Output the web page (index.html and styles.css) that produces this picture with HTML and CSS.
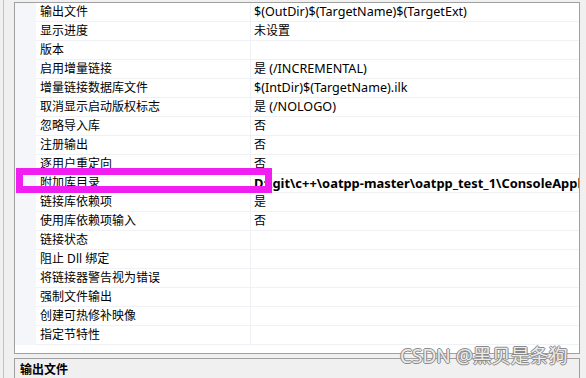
FILE: index.html
```html
<!DOCTYPE html>
<html lang="zh-CN">
<head>
<meta charset="utf-8">
<title>链接器 - 常规</title>
<link rel="stylesheet" href="styles.css">
</head>
<body>
<div class="screen">
  <div class="rail-area"><div class="rail"></div></div>
  <div class="main">
    <div class="panel">
      <div class="gutter"></div>
      <div class="grid">
        <div class="row"><div class="name">输出文件</div><div class="value"><span class="lat">$(OutDir)$(TargetName)$(TargetExt)</span></div></div>
        <div class="row"><div class="name">显示进度</div><div class="value">未设置</div></div>
        <div class="row"><div class="name">版本</div><div class="value"></div></div>
        <div class="row"><div class="name">启用增量链接</div><div class="value">是 <span class="lat">(/INCREMENTAL)</span></div></div>
        <div class="row"><div class="name">增量链接数据库文件</div><div class="value"><span class="lat">$(IntDir)$(TargetName).ilk</span></div></div>
        <div class="row"><div class="name">取消显示启动版权标志</div><div class="value">是 <span class="lat">(/NOLOGO)</span></div></div>
        <div class="row"><div class="name">忽略导入库</div><div class="value">否</div></div>
        <div class="row"><div class="name">注册输出</div><div class="value">否</div></div>
        <div class="row"><div class="name">逐用户重定向</div><div class="value">否</div></div>
        <div class="row"><div class="name">附加库目录</div><div class="value"><span class="lat bold">D:\git\c++\oatpp-master\oatpp_test_1\ConsoleAppli</span></div></div>
        <div class="row"><div class="name">链接库依赖项</div><div class="value">是</div></div>
        <div class="row"><div class="name">使用库依赖项输入</div><div class="value">否</div></div>
        <div class="row"><div class="name">链接状态</div><div class="value"></div></div>
        <div class="row"><div class="name">阻止 Dll 绑定</div><div class="value"></div></div>
        <div class="row"><div class="name">将链接器警告视为错误</div><div class="value"></div></div>
        <div class="row"><div class="name">强制文件输出</div><div class="value"></div></div>
        <div class="row"><div class="name">创建可热修补映像</div><div class="value"></div></div>
        <div class="row"><div class="name">指定节特性</div><div class="value"></div></div>
      </div>
    </div>
    <div class="desc">
      <div class="desc-title">输出文件</div>
    </div>
  </div>
  <div class="highlight"></div>
  <div class="watermark">CSDN @黑贝是条狗</div>
</div>
</body>
</html>
```
FILE: styles.css
```css
html, body {
  margin: 0;
  padding: 0;
  background: #f0f0f0;
}
body {
  width: 586px;
  height: 378px;
  overflow: hidden;
  font-family: "Noto Sans", "Noto Sans CJK SC", sans-serif;
  font-size: 12px;
  color: #000;
}
.screen {
  position: relative;
  display: flex;
  width: 586px;
  height: 378px;
}
.rail-area {
  width: 14px;
  flex: none;
  display: flex;
}
.rail {
  margin-left: 3px;
  width: 1px;
  background: #c2c2c2;
}
.main {
  width: 566px;
  flex: none;
  padding-top: 2px;
  display: flex;
  flex-direction: column;
  gap: 4px;
}
.panel {
  height: 354px;
  border: 1px solid #a0a0a0;
  background: #fff;
  display: flex;
  overflow: hidden;
}
.gutter {
  width: 21px;
  flex: none;
  background: #f4f6fa;
  height: 342px;
}
.grid {
  flex: 1;
  min-width: 0;
}
.row {
  display: flex;
  height: 18px;
  border-bottom: 1px solid #eff1f5;
  line-height: 18px;
}
.name {
  width: 210px;
  flex: none;
  padding-left: 4px;
  border-right: 1px solid #eff1f5;
  white-space: nowrap;
}
.value {
  flex: 1;
  min-width: 0;
  padding-left: 3px;
  white-space: nowrap;
  overflow: hidden;
}
.lat {
  font-size: 12.6px;
}
.bold {
  font-weight: bold;
  font-size: 12.9px;
}
.desc {
  flex: 1;
  border: 1px solid #a0a0a0;
  border-bottom: none;
  padding: 3px 0 0 5px;
}
.desc-title {
  font-weight: bold;
  line-height: 16px;
}
.highlight {
  position: absolute;
  left: 16px;
  top: 168px;
  width: 242px;
  height: 11px;
  border: 7px solid #f01ef0;
}
.watermark {
  position: absolute;
  left: 400px;
  top: 344px;
  font-size: 19px;
  line-height: 24px;
  color: rgba(255, 255, 255, 0.85);
  text-shadow: 1px 0 0 #8a8a8a, -1px 0 0 #8a8a8a, 0 1px 0 #8a8a8a, 0 -1px 0 #8a8a8a;
  white-space: nowrap;
}
```
